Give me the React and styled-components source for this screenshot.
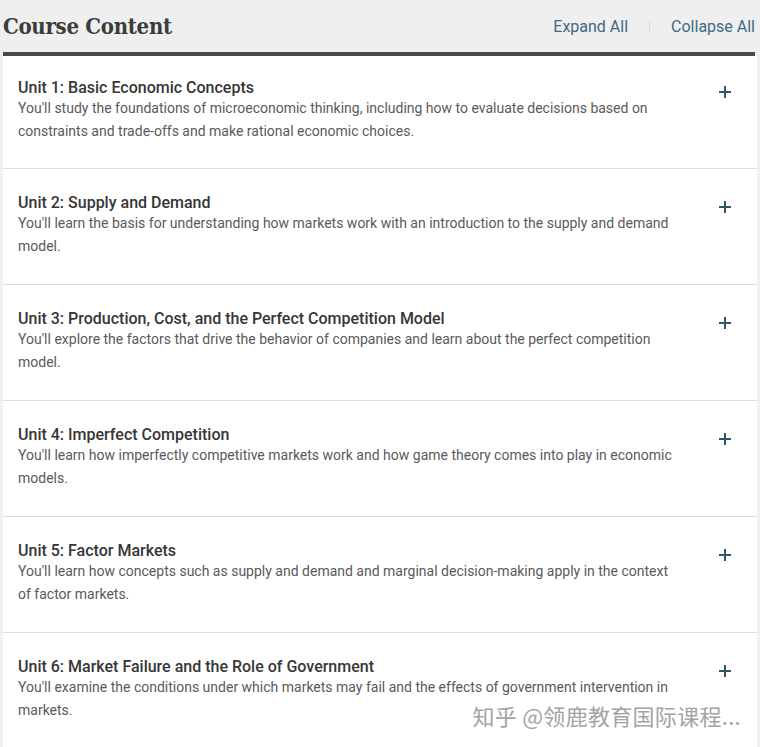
import React from "react";
import styled, { createGlobalStyle } from "styled-components";

const Global = createGlobalStyle`
  html, body { margin: 0; padding: 0; background: #efefef; }
  body { font-family: Roboto, "Noto Sans", sans-serif; overflow: hidden; }
`;

const Page = styled.div`
  position: relative;
  width: 760px;
  height: 747px;
  overflow: hidden;
  padding: 0 3px;
  box-sizing: border-box;
  background: #efefef;
`;

const Header = styled.div`
  height: 52px;
  display: flex;
  align-items: center;
  justify-content: space-between;
`;

const Title = styled.h2`
  margin: 0;
  font-family: "DejaVu Serif Condensed", "DejaVu Serif", serif;
  font-weight: 700;
  font-size: 22px;
  color: #3c3c3c;
  letter-spacing: -0.3px;
`;

const Links = styled.div`
  display: flex;
  align-items: center;
  gap: 21px;
  padding-right: 2px;
`;

const Link = styled.a`
  font-family: Roboto, sans-serif;
  font-size: 16px;
  color: #3f6a84;
  text-decoration: none;
`;

const Sep = styled.span`
  width: 1px;
  height: 12px;
  background: #dedede;
`;

const Bar = styled.div`
  height: 4px;
  background: #4b4b45;
  margin-right: 2px;
`;

const List = styled.div`
  display: flex;
  flex-direction: column;
`;

const Card = styled.div`
  background: #fff;
  border-bottom: 1px solid #dcdcdc;
  box-sizing: border-box;
  height: 116px;
  display: flex;
  justify-content: space-between;
  padding: 24px 0 0 15px;
  &:first-child { height: 113px; padding-top: 22px; }
`;

const Text = styled.div`
  width: 664px;
`;

const UnitTitle = styled.div`
  font-size: 16px;
  font-weight: 500;
  line-height: 19px;
  color: #363636;
`;

const Desc = styled.div`
  font-size: 14px;
  line-height: 23px;
  color: #5a5a5a;
`;

const Plus = styled.div`
  width: 12px;
  height: 12px;
  margin: 8px 26px 0 0;
  position: relative;
  &::before, &::after {
    content: "";
    position: absolute;
    background: #2d5868;
  }
  &::before { left: 0; right: 0; top: 5px; height: 2px; }
  &::after { top: 0; bottom: 0; left: 5px; width: 2px; }
`;

const Watermark = styled.div`
  position: absolute;
  right: 19px;
  bottom: 17px;
  font-family: "Noto Sans CJK SC", sans-serif;
  font-size: 22px;
  line-height: 30px;
  color: #a3a3a3;
  text-shadow: 0 0 2px #fff;
  letter-spacing: 0.3px;
`;

const units = [
  ["Unit 1: Basic Economic Concepts", "You'll study the foundations of microeconomic thinking, including how to evaluate decisions based on constraints and trade-offs and make rational economic choices."],
  ["Unit 2: Supply and Demand", "You'll learn the basis for understanding how markets work with an introduction to the supply and demand model."],
  ["Unit 3: Production, Cost, and the Perfect Competition Model", "You'll explore the factors that drive the behavior of companies and learn about the perfect competition model."],
  ["Unit 4: Imperfect Competition", "You'll learn how imperfectly competitive markets work and how game theory comes into play in economic models."],
  ["Unit 5: Factor Markets", "You'll learn how concepts such as supply and demand and marginal decision-making apply in the context of factor markets."],
  ["Unit 6: Market Failure and the Role of Government", "You'll examine the conditions under which markets may fail and the effects of government intervention in markets."],
];

export default function App() {
  return (
    <Page>
      <Global />
      <Header>
        <Title>Course Content</Title>
        <Links>
          <Link>Expand All</Link>
          <Sep />
          <Link>Collapse All</Link>
        </Links>
      </Header>
      <Bar />
      <List>
        {units.map(([t, d]) => (
          <Card key={t}>
            <Text>
              <UnitTitle>{t}</UnitTitle>
              <Desc>{d}</Desc>
            </Text>
            <Plus />
          </Card>
        ))}
      </List>
      <Watermark>知乎 @领鹿教育国际课程...</Watermark>
    </Page>
  );
}
